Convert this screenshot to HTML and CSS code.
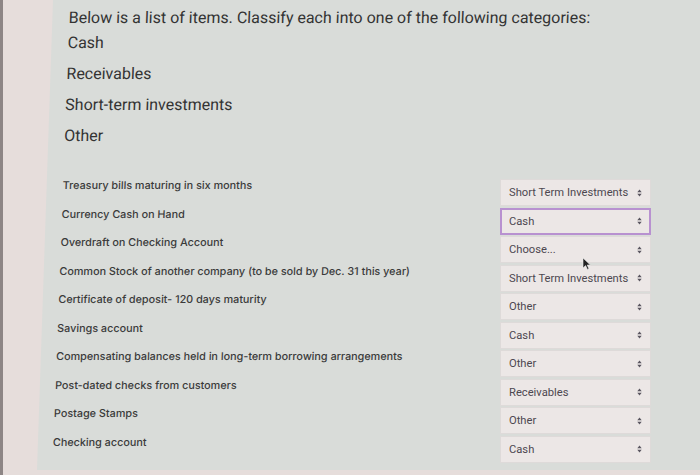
FILE: index.html
```html
<!DOCTYPE html>
<html lang="en">
<head>
<meta charset="utf-8">
<title>Classify items</title>
<link rel="stylesheet" href="styles.css">
</head>
<body>
<div class="screen">
  <div class="panel">
    <div class="intro">
      <p class="lead">Below is a list of items. Classify each into one of the following categories:</p>
      <p class="cat">Cash</p>
      <p class="cat">Receivables</p>
      <p class="cat">Short-term investments</p>
      <p class="cat">Other</p>
    </div>
    <div class="table">
      <div class="labels">
        <div class="label">Treasury bills maturing in six months</div>
        <div class="label">Currency Cash on Hand</div>
        <div class="label">Overdraft on Checking Account</div>
        <div class="label">Common Stock of another company (to be sold by Dec. 31 this year)</div>
        <div class="label">Certificate of deposit- 120 days maturity</div>
        <div class="label">Savings account</div>
        <div class="label">Compensating balances held in long-term borrowing arrangements</div>
        <div class="label">Post-dated checks from customers</div>
        <div class="label">Postage Stamps</div>
        <div class="label">Checking account</div>
      </div>
      <div class="selects">
        <div class="select"><span>Short Term Investments</span><svg class="arrows" width="5" height="8" viewBox="0 0 5 8"><path d="M0.3 3.3L2.5 0.4L4.7 3.3Z M0.3 4.7L2.5 7.6L4.7 4.7Z"/></svg></div>
        <div class="select focus"><span>Cash</span><svg class="arrows" width="5" height="8" viewBox="0 0 5 8"><path d="M0.3 3.3L2.5 0.4L4.7 3.3Z M0.3 4.7L2.5 7.6L4.7 4.7Z"/></svg></div>
        <div class="select"><span>Choose...</span><svg class="arrows" width="5" height="8" viewBox="0 0 5 8"><path d="M0.3 3.3L2.5 0.4L4.7 3.3Z M0.3 4.7L2.5 7.6L4.7 4.7Z"/></svg></div>
        <div class="select"><span>Short Term Investments</span><svg class="arrows" width="5" height="8" viewBox="0 0 5 8"><path d="M0.3 3.3L2.5 0.4L4.7 3.3Z M0.3 4.7L2.5 7.6L4.7 4.7Z"/></svg></div>
        <div class="select"><span>Other</span><svg class="arrows" width="5" height="8" viewBox="0 0 5 8"><path d="M0.3 3.3L2.5 0.4L4.7 3.3Z M0.3 4.7L2.5 7.6L4.7 4.7Z"/></svg></div>
        <div class="select"><span>Cash</span><svg class="arrows" width="5" height="8" viewBox="0 0 5 8"><path d="M0.3 3.3L2.5 0.4L4.7 3.3Z M0.3 4.7L2.5 7.6L4.7 4.7Z"/></svg></div>
        <div class="select"><span>Other</span><svg class="arrows" width="5" height="8" viewBox="0 0 5 8"><path d="M0.3 3.3L2.5 0.4L4.7 3.3Z M0.3 4.7L2.5 7.6L4.7 4.7Z"/></svg></div>
        <div class="select"><span>Receivables</span><svg class="arrows" width="5" height="8" viewBox="0 0 5 8"><path d="M0.3 3.3L2.5 0.4L4.7 3.3Z M0.3 4.7L2.5 7.6L4.7 4.7Z"/></svg></div>
        <div class="select"><span>Other</span><svg class="arrows" width="5" height="8" viewBox="0 0 5 8"><path d="M0.3 3.3L2.5 0.4L4.7 3.3Z M0.3 4.7L2.5 7.6L4.7 4.7Z"/></svg></div>
        <div class="select"><span>Cash</span><svg class="arrows" width="5" height="8" viewBox="0 0 5 8"><path d="M0.3 3.3L2.5 0.4L4.7 3.3Z M0.3 4.7L2.5 7.6L4.7 4.7Z"/></svg></div>
      </div>
      <svg class="cursor" width="9" height="13" viewBox="0 0 9 13"><path d="M1 1L1 11L3.6 8.6L5.4 12.4L6.9 11.7L5.2 8L8.4 8Z" fill="#222" stroke="#eee" stroke-width="0.6"/></svg>
    </div>
  </div>
</div>
</body>
</html>
```

FILE: styles.css
```css
html, body {
  margin: 0;
  padding: 0;
}
body {
  width: 700px;
  height: 475px;
  overflow: hidden;
  background: #e9e5e3;
}
.screen {
  height: 475px;
  background: #e6dddb;
  border-left: 3px solid #8d8585;
  box-sizing: border-box;
}
.panel {
  margin-left: -3px;
  height: 470px;
  background: #d9dcd9;
  clip-path: polygon(53px 0, 100% 0, 100% 100%, 37px 100%);
  padding: 8px 49px 0 63px;
  box-sizing: border-box;
  display: flex;
  flex-direction: column;
  color: #333;
}
.intro {
  display: flex;
  flex-direction: column;
  gap: 11px;
  padding-left: 6px;
  transform: skewX(-2.2deg);
  transform-origin: 0 0;
  font-family: Roboto, "Liberation Sans", sans-serif;
  font-size: 16px;
  line-height: 20px;
}
.intro p {
  margin: 0;
}
.intro .lead {
  margin-bottom: -6px;
}
.table {
  position: relative;
  margin-top: 33px;
  display: flex;
}
.labels {
  flex: 1;
  display: flex;
  flex-direction: column;
  gap: 1.5px;
  transform: skewX(-2.2deg);
  transform-origin: 0 0;
  font-family: Inter, "Liberation Sans", sans-serif;
  font-size: 10.8px;
  font-weight: 500;
  line-height: 14px;
  color: #3a3a3a;
}
.label {
  height: 27px;
  white-space: nowrap;
}
.selects {
  width: 151px;
  display: flex;
  flex-direction: column;
  gap: 1.5px;
}
.select {
  height: 27px;
  box-sizing: border-box;
  background: #ece7e6;
  border: 1px solid #dedad9;
  display: flex;
  align-items: center;
  justify-content: space-between;
  padding: 0 8px 0 8px;
  font-family: Roboto, "Liberation Sans", sans-serif;
  font-size: 11.2px;
  color: #4c4850;
}
.select.focus {
  border: 2px solid #b891d0;
  padding: 0 7px 0 7px;
}
.arrows {
  fill: #5a5660;
  flex: none;
}
.cursor {
  position: absolute;
  top: 78px;
  right: 60px;
}
```
